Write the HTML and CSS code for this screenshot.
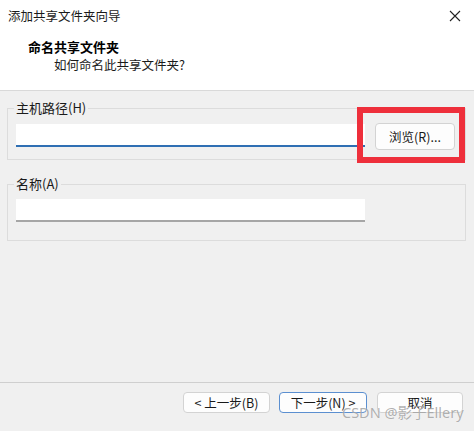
FILE: index.html
```html
<!DOCTYPE html>
<html lang="zh-CN">
<head>
<meta charset="utf-8">
<title>添加共享文件夹向导</title>
<link rel="stylesheet" href="styles.css">
</head>
<body>
<div class="window">
  <div class="header">
    <div class="titlebar">
      <span class="title">添加共享文件夹向导</span>
      <span class="close">
        <svg width="12" height="12" viewBox="0 0 12 12"><path d="M1 1 L11 11 M11 1 L1 11" stroke="#222" stroke-width="1.1" fill="none"/></svg>
      </span>
    </div>
    <div class="heading">命名共享文件夹</div>
    <div class="subtitle">如何命名此共享文件夹?</div>
  </div>
  <div class="content">
    <fieldset class="group group-path">
      <legend>主机路径(H)</legend>
      <div class="row">
        <div class="input input-active"></div>
        <button class="btn btn-browse">浏览(R)...</button>
      </div>
    </fieldset>
    <fieldset class="group group-name">
      <legend>名称(A)</legend>
      <div class="row">
        <div class="input"></div>
      </div>
    </fieldset>
  </div>
  <div class="footer">
    <button class="btn btn-back">&lt; 上一步(B)</button>
    <button class="btn btn-next">下一步(N) &gt;</button>
    <button class="btn btn-cancel">取消</button>
  </div>
  <div class="highlight"></div>
  <div class="watermark">CSDN @影子Ellery</div>
</div>
</body>
</html>
```

FILE: styles.css
```css
html, body {
  margin: 0;
  padding: 0;
}
body {
  width: 474px;
  height: 431px;
  overflow: hidden;
  background: #f0f0f0;
  font-family: "Microsoft YaHei UI", "Noto Sans CJK SC", "Noto Sans", sans-serif;
  font-size: 12.5px;
  color: #1b1b1b;
}
.window {
  position: relative;
  width: 474px;
  height: 431px;
  display: flex;
  flex-direction: column;
}
.header {
  background: #ffffff;
  height: 90px;
  border-bottom: 1px solid #d9d9d9;
  display: flex;
  flex-direction: column;
}
.titlebar {
  height: 32px;
  display: flex;
  align-items: center;
  justify-content: space-between;
  padding: 0 13px 0 8px;
}
.title {
  font-size: 12.5px;
  line-height: 18px;
  color: #1a1a1a;
}
.close {
  display: flex;
  align-items: center;
}
.heading {
  margin-top: 6px;
  padding-left: 28px;
  font-weight: bold;
  font-size: 13px;
  line-height: 18px;
  color: #000;
}
.subtitle {
  padding-left: 54px;
  line-height: 18px;
  font-size: 12.5px;
  color: #1a1a1a;
}
.content {
  flex: 1;
  padding: 0 8px 0 7px;
  display: flex;
  flex-direction: column;
}
.group {
  margin: 0;
  border: 1px solid #dcdcdc;
  border-radius: 0;
  padding: 6px 8px 9px 8px;
  min-width: 0;
}
.group legend {
  padding: 0 2px;
  margin-left: -2px;
  line-height: 18px;
  font-size: 13px;
  color: #1a1a1a;
}
.group-path {
  margin-top: 8px;
}
.group-name {
  margin-top: 15px;
  padding-bottom: 18px;
}
.row {
  display: flex;
  align-items: flex-start;
  gap: 10px;
}
.input {
  width: 349px;
  height: 21px;
  background: #ffffff;
  border-bottom: 2px solid #a6a6a6;
  box-sizing: content-box;
}
.group-path .input {
  margin-top: 1px;
}
.input-active {
  border-bottom: 2px solid #2f6fb3;
  height: 21px;
}
.btn {
  font-family: inherit;
  font-size: 12.5px;
  color: #1a1a1a;
  background: #fdfdfd;
  border: 1px solid #d3d3d3;
  border-radius: 4px;
  padding: 0;
  margin: 0;
  box-sizing: border-box;
  display: flex;
  align-items: center;
  justify-content: center;
}
.btn-browse {
  width: 80px;
  height: 27px;
}
.footer {
  height: 39px;
  border-top: 1px solid #cfcfcf;
  display: flex;
  justify-content: flex-end;
  align-items: flex-start;
  padding: 9px 11px 0 0;
  box-sizing: content-box;
}
.footer .btn {
  height: 21px;
}
.btn-back {
  width: 87px;
  margin-right: 9px;
}
.btn-next {
  width: 88px;
  margin-right: 10px;
  border-color: #5b8fd0;
}
.btn-cancel {
  width: 86px;
}
.highlight {
  position: absolute;
  left: 357px;
  top: 107px;
  width: 108px;
  height: 56px;
  box-sizing: border-box;
  border: 6px solid #ee2f3b;
}
.watermark {
  position: absolute;
  left: 342px;
  top: 402px;
  font-family: "Noto Sans", "Noto Sans CJK SC", sans-serif;
  font-size: 14.5px;
  line-height: 20px;
  color: rgba(110, 110, 110, 0.55);
  text-shadow: 0 0 1px rgba(255, 255, 255, 0.8);
  white-space: nowrap;
}
```
